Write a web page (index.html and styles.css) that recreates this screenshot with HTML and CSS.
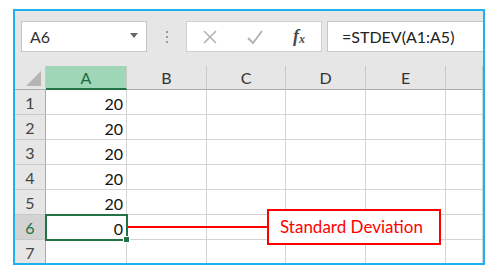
FILE: index.html
```html
<!DOCTYPE html>
<html lang="en">
<head>
  <meta charset="UTF-8">
  <title>STDEV</title>
  <link rel="stylesheet" href="styles.css">
</head>
<body>
  <div class="frame">
    <div class="toolbar">
      <div class="name-box">
        <span>A6</span>
        <span class="caret"></span>
      </div>
      <div class="grip"><i></i><i></i><i></i></div>
      <div class="fx-buttons">
        <svg class="tool" width="16" height="16" viewBox="0 0 16 16"><path d="M2 2 L14 14 M14 2 L2 14" stroke="#b3b3b3" stroke-width="1.6" fill="none"/></svg>
        <svg class="tool" width="18" height="16" viewBox="0 0 18 16"><path d="M2 9 L7 14 L16 2" stroke="#b3b3b3" stroke-width="2" fill="none"/></svg>
        <span class="fx">f<sub>x</sub></span>
      </div>
      <div class="formula">=STDEV(A1:A5)</div>
    </div>

    <div class="sheet">
      <div class="hd corner"><span class="tri"></span></div>
      <div class="hd col active">A</div>
      <div class="hd col">B</div>
      <div class="hd col">C</div>
      <div class="hd col">D</div>
      <div class="hd col">E</div>
      <div class="hd col"></div>

      <div class="hd row">1</div><div class="cell num">20</div><div class="cell"></div><div class="cell"></div><div class="cell"></div><div class="cell"></div><div class="cell"></div>
      <div class="hd row">2</div><div class="cell num">20</div><div class="cell"></div><div class="cell"></div><div class="cell"></div><div class="cell"></div><div class="cell"></div>
      <div class="hd row">3</div><div class="cell num">20</div><div class="cell"></div><div class="cell"></div><div class="cell"></div><div class="cell"></div><div class="cell"></div>
      <div class="hd row">4</div><div class="cell num">20</div><div class="cell"></div><div class="cell"></div><div class="cell"></div><div class="cell"></div><div class="cell"></div>
      <div class="hd row">5</div><div class="cell num">20</div><div class="cell"></div><div class="cell"></div><div class="cell"></div><div class="cell"></div><div class="cell"></div>
      <div class="hd row active">6</div><div class="cell num selected">0<span class="handle"></span></div><div class="cell"></div><div class="cell"></div><div class="cell"></div><div class="cell"></div><div class="cell"></div>
      <div class="hd row">7</div><div class="cell"></div><div class="cell"></div><div class="cell"></div><div class="cell"></div><div class="cell"></div><div class="cell"></div>

      <div class="arrow"></div>
      <div class="callout">Standard Deviation</div>
    </div>
  </div>
</body>
</html>
```

FILE: styles.css
```css
body {
  margin: 0;
  background: #ffffff;
  font-family: Lato, "Open Sans", sans-serif;
  color: #222;
}

.frame {
  margin: 9px 0 0 13px;
  width: 468px;
  height: 252px;
  border: 2px solid #1fb1ee;
  background: #e6e6e6;
  overflow: hidden;
}

/* formula bar */
.toolbar {
  height: 55px;
  box-sizing: border-box;
  padding: 10px 0 0 6px;
  display: flex;
  align-items: flex-start;
}

.name-box {
  width: 126px;
  height: 31px;
  box-sizing: border-box;
  background: #fff;
  border: 1px solid #c6c6c6;
  display: flex;
  align-items: center;
  justify-content: space-between;
  padding: 0 8px 0 8px;
  font-size: 16px;
  color: #333;
}

.caret {
  width: 0;
  height: 0;
  border-left: 4px solid transparent;
  border-right: 4px solid transparent;
  border-top: 5px solid #666;
  margin-top: -3px;
}

.grip {
  width: 39px;
  height: 31px;
  display: flex;
  flex-direction: column;
  align-items: center;
  justify-content: center;
  gap: 3px;
}

.grip i {
  width: 2px;
  height: 2px;
  background: #9a9a9a;
}

.fx-buttons {
  width: 136px;
  height: 31px;
  box-sizing: border-box;
  background: #fff;
  border: 1px solid #d0d0d0;
  display: flex;
  align-items: center;
  padding-left: 15px;
  gap: 28px;
}

.fx {
  font-family: "Liberation Serif", serif;
  font-style: italic;
  font-weight: bold;
  font-size: 18px;
  color: #4a4a4a;
  margin-left: 1px;
}

.fx sub {
  font-size: 12px;
  vertical-align: -1px;
}

.formula {
  flex: 1;
  height: 31px;
  box-sizing: border-box;
  margin-left: 5px;
  background: #fff;
  border: 1px solid #c6c6c6;
  border-right: none;
  padding-left: 14px;
  font-size: 16px;
  line-height: 29px;
  color: #222;
}

/* grid */
.sheet {
  position: relative;
  display: grid;
  grid-template-columns: 31px 81px 80px 79px 80px 80px 1fr;
  grid-template-rows: 24px repeat(7, 25px);
  background: #fff;
  height: 197px;
}

.hd {
  background: #e6e6e6;
  color: #333;
  font-size: 16px;
  display: flex;
  align-items: center;
  justify-content: center;
  box-sizing: border-box;
}

.hd.col {
  border-right: 1px solid #c9c9c9;
  border-bottom: 1px solid #ababab;
}

.hd.col.active {
  background: #a0d6b8;
  color: #1e6b3f;
  border-bottom: 2px solid #217346;
}

.hd.corner {
  border-right: 1px solid #c9c9c9;
  border-bottom: 1px solid #ababab;
  justify-content: flex-end;
  align-items: flex-end;
  padding: 0 4px 3px 0;
}

.tri {
  width: 0;
  height: 0;
  border-left: 15px solid transparent;
  border-bottom: 15px solid #b5b5b5;
}

.hd.row {
  border-right: 1px solid #ababab;
  border-bottom: 1px solid #c9c9c9;
  color: #444;
}

.hd.row.active {
  background: #d3d3d3;
  color: #217346;
}

.cell {
  border-right: 1px solid #d4d4d4;
  border-bottom: 1px solid #d4d4d4;
  box-sizing: border-box;
  font-size: 16px;
  color: #111;
}

.cell.num {
  text-align: right;
  padding-right: 3px;
  line-height: 27px;
}

.cell.selected {
  position: relative;
  outline: 2px solid #217346;
  outline-offset: -1px;
  z-index: 1;
}

.handle {
  position: absolute;
  right: -4px;
  bottom: -4px;
  width: 5px;
  height: 5px;
  background: #217346;
  border: 1px solid #fff;
}

/* annotation */
.arrow {
  position: absolute;
  left: 113px;
  top: 160px;
  width: 142px;
  height: 2px;
  background: #ff0000;
}

.arrow::after {
  content: "";
  position: absolute;
  right: -8px;
  top: -4px;
  border-top: 5px solid transparent;
  border-bottom: 5px solid transparent;
  border-left: 9px solid #ff0000;
}

.callout {
  position: absolute;
  left: 252px;
  top: 143px;
  width: 174px;
  height: 36px;
  box-sizing: border-box;
  border: 2px solid #ff0000;
  background: #fff;
  color: #ff0000;
  font-size: 17px;
  line-height: 32px;
  padding-left: 11px;
  z-index: 2;
}
```
